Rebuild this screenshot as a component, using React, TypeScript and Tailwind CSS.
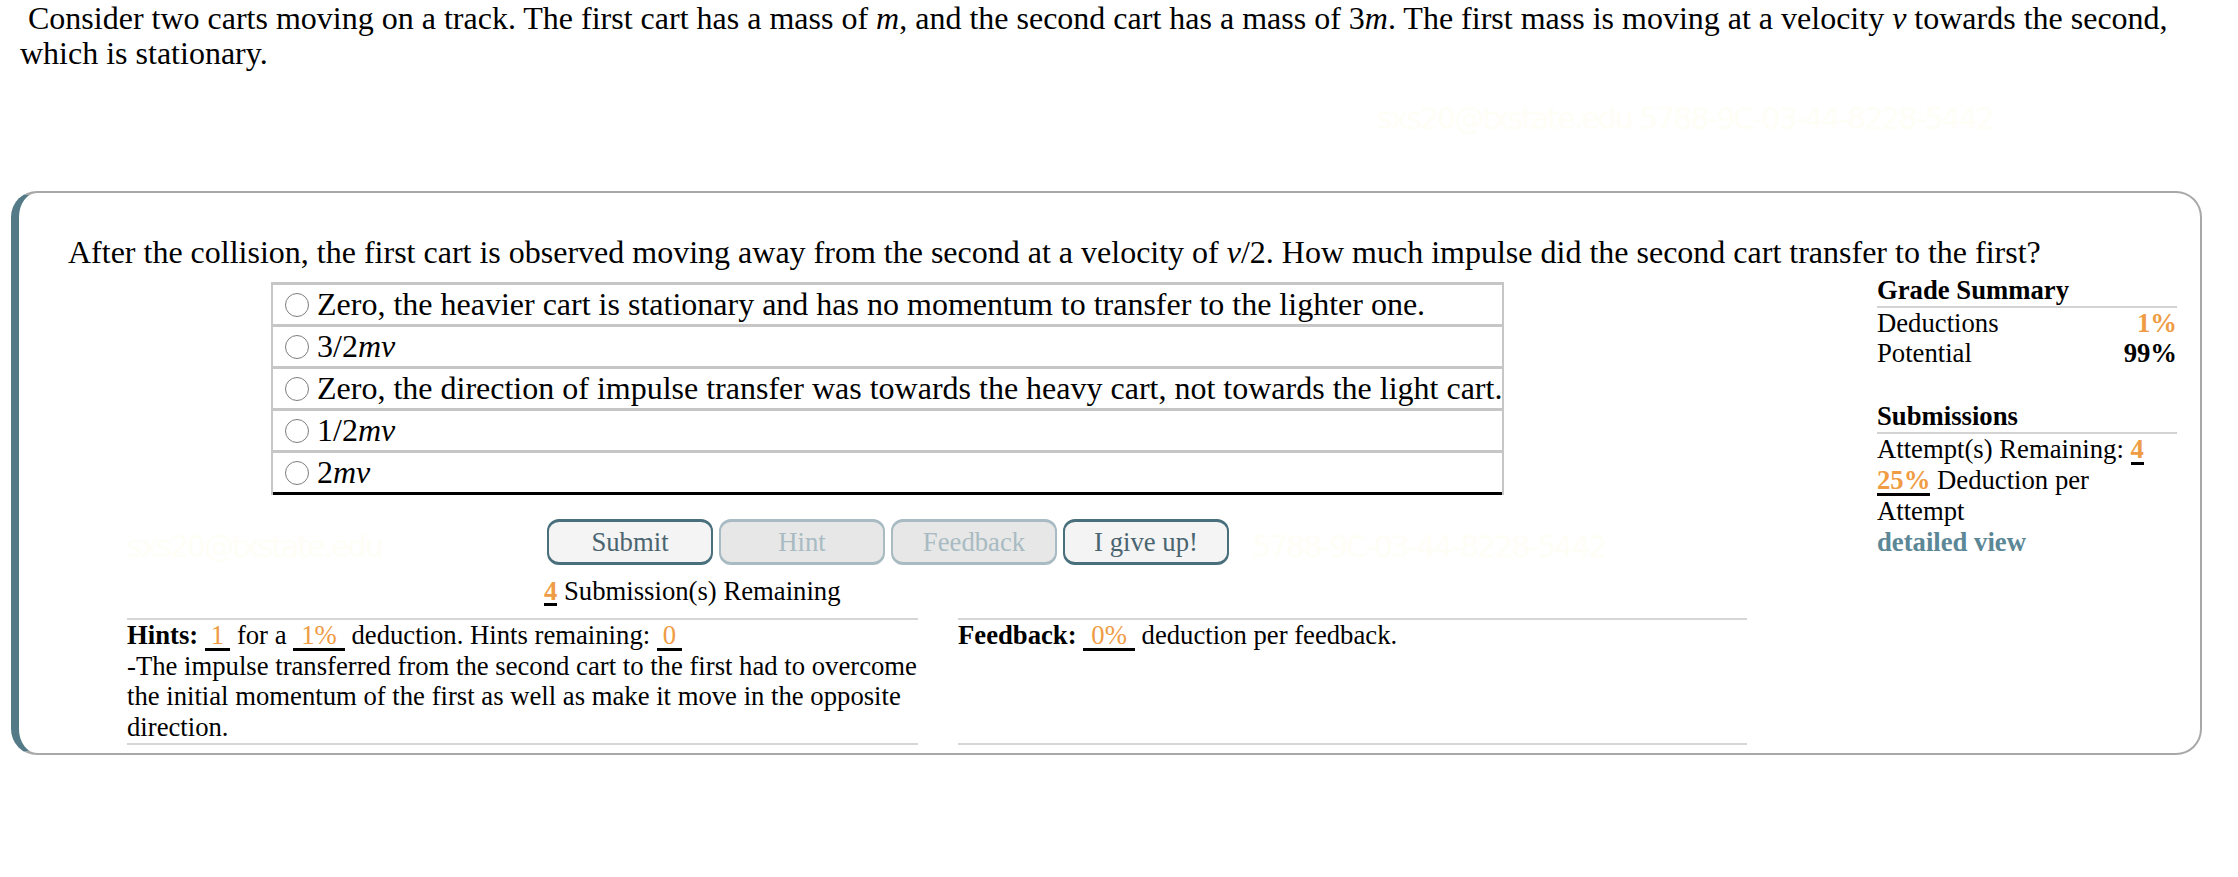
import React from 'react';

const options: React.ReactNode[] = [
  <>Zero, the heavier cart is stationary and has no momentum to transfer to the lighter one.</>,
  <>3/2<i>mv</i></>,
  <>Zero, the direction of impulse transfer was towards the heavy cart, not towards the light cart.</>,
  <>1/2<i>mv</i></>,
  <>2<i>mv</i></>,
];

const Blank = ({ children, bold = false, pad = 'px-[6px]' }: { children: React.ReactNode; bold?: boolean; pad?: string }) => (
  <span className={`inline-block border-b-[3px] border-black leading-[26px] text-[#ef9c44] ${pad} ${bold ? 'font-bold' : ''}`}>
    {children}
  </span>
);

const ActionButton = ({ label, disabled = false }: { label: string; disabled?: boolean }) => (
  <button
    className={
      disabled
        ? 'h-[46px] w-[166px] rounded-[12px] border-x-2 border-y-[3px] border-[#a8bbc2] bg-[#e7e7e7] text-[26.7px] text-[#a8bbc2]'
        : 'h-[46px] w-[166px] rounded-[12px] border-x-2 border-y-[3px] border-[#4a6f7c] bg-[#f4f4f4] text-[26.7px] text-[#4a6470]'
    }
  >
    {label}
  </button>
);

export default function App() {
  return (
    <div className="relative min-h-screen bg-white font-['Liberation_Serif','Times_New_Roman',serif] text-black">
      {/* faint watermark behind the page */}
      <div className="pointer-events-none absolute left-[1377px] top-[96px] font-['DejaVu_Sans',sans-serif] text-[30px] tracking-[-2px] text-[#fefef7] whitespace-nowrap">
        sxs20@txstate.edu 5788-9C-03-44-8228-5442
      </div>
      <div className="pointer-events-none absolute left-[127px] top-[524px] font-['DejaVu_Sans',sans-serif] text-[30px] tracking-[-2px] text-[#fefef7] whitespace-nowrap">
        sxs20@txstate.edu
      </div>
      <div className="pointer-events-none absolute left-[1252px] top-[524px] font-['DejaVu_Sans',sans-serif] text-[30px] tracking-[-2px] text-[#fefef7] whitespace-nowrap">
        5788-9C-03-44-8228-5442
      </div>

      <p className="relative pl-[20px] pr-5 pt-px text-[32px] leading-[35px]">
        {'\u00a0'}Consider two carts moving on a track. The first cart has a mass of <i>m</i>, and the second cart has a
        mass of 3<i>m</i>. The first mass is moving at a velocity <i>v</i> towards the second, which is stationary.
      </p>

      {/* question panel */}
      <div className="relative ml-[11px] mr-[36px] mt-[120px] rounded-[26px] border-y-2 border-r-2 border-l-8 border-[#a8a8a8] border-l-[#537a86] pb-[8px] pl-[49px] pr-[23px] pt-[41px]">
        <div className="text-[32px] leading-[37px]">
          After the collision, the first cart is observed moving away from the second at a velocity of <i>v</i>/2. How much
          impulse did the second cart transfer to the first?
        </div>

        <div className="flex items-start">
          <div className="flex-1">
            {/* answer choices */}
            <div className="ml-[203px] mt-[11px] w-[1233px] border-x-2 border-t-[3px] border-[#c6c6c6]">
              {options.map((opt, i) => (
                <div
                  key={i}
                  className={`flex h-[42px] items-center gap-[8px] border-b-[3px] pl-[12px] text-[32px] leading-[37px] ${
                    i === options.length - 1 ? 'border-black' : 'border-[#c6c6c6]'
                  }`}
                >
                  <span className="inline-block h-[24px] w-[24px] shrink-0 rounded-full border-[1.5px] border-[#7d7d7d] bg-white" />
                  <span className="whitespace-nowrap">{opt}</span>
                </div>
              ))}
            </div>

            {/* actions */}
            <div className="ml-[479px] mt-[24px] flex gap-[6px]">
              <ActionButton label="Submit" />
              <ActionButton label="Hint" disabled />
              <ActionButton label="Feedback" disabled />
              <ActionButton label="I give up!" />
            </div>

            <div className="ml-[476px] mt-[11px] text-[26.7px] leading-[30.7px]">
              <span className="inline-block border-b-[3px] border-black font-bold leading-[24px] text-[#ef9c44]">4</span>{' '}
              Submission(s) Remaining
            </div>

            {/* hints / feedback */}
            <div className="ml-[59px] mt-[11px] flex gap-[40px] text-[26.7px] leading-[30.7px]">
              <div className="w-[791px] border-y-2 border-[#d6d6d6]">
                <div>
                  <b>Hints:</b> <Blank>1</Blank> for a <Blank pad="px-[8px]">1%</Blank> deduction. Hints remaining:{' '}
                  <Blank>0</Blank>
                </div>
                <div>
                  -The impulse transferred from the second cart to the first had to overcome the initial momentum of the
                  first as well as make it move in the opposite direction.
                </div>
              </div>
              <div className="w-[789px] border-y-2 border-[#d6d6d6]">
                <b>Feedback:</b> <Blank pad="px-[8px]">0%</Blank> deduction per feedback.
              </div>
            </div>
          </div>

          {/* grade summary */}
          <div className="mt-[4px] w-[300px] shrink-0 text-[26.7px] leading-[30.7px]">
            <div className="border-b-2 border-[#d3d3d3] font-bold">Grade Summary</div>
            <div className="flex justify-between">
              <span>Deductions</span>
              <span className="font-bold text-[#ef9c44]">1%</span>
            </div>
            <div className="flex justify-between">
              <span>Potential</span>
              <span className="font-bold">99%</span>
            </div>
            <div className="mt-[32px] border-b-2 border-[#d3d3d3] font-bold">Submissions</div>
            <div>
              Attempt(s) Remaining: <Blank bold pad="px-0">4</Blank>
            </div>
            <div>
              <Blank bold pad="px-0">25%</Blank> Deduction per Attempt
            </div>
            <div className="font-bold text-[#5b8796]">detailed view</div>
          </div>
        </div>
      </div>
    </div>
  );
}
